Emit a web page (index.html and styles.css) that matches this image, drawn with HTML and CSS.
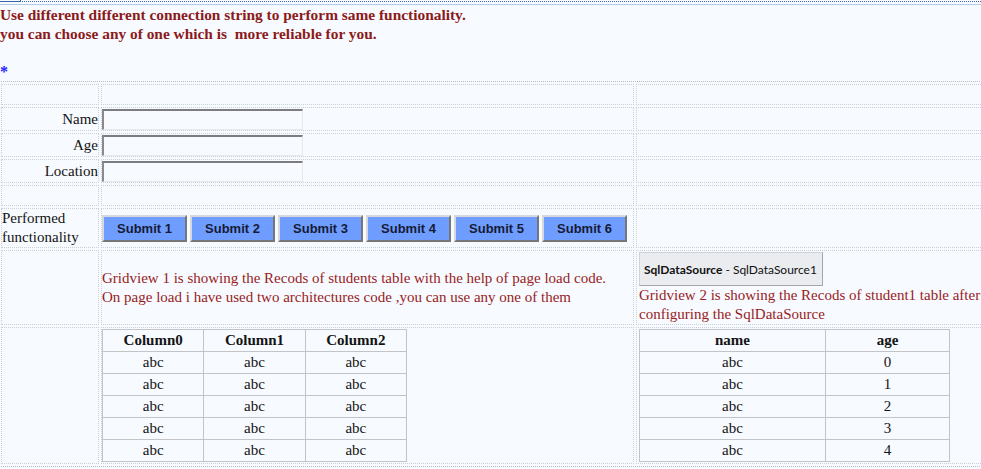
FILE: index.html
```html
<!DOCTYPE html>
<html>
<head>
<meta charset="utf-8">
<title>Connection strings</title>
<link rel="stylesheet" href="styles.css">
</head>
<body>
<div class="form-edge"><span class="form-tag"></span></div>
<div class="div-edge"></div>
<p class="intro"><span class="intro-text">Use different different connection string to perform same functionality.<br>you can choose any of one which is&nbsp; more reliable for you.</span><br><br><span class="star">*</span></p>
<table class="layout">
  <tr class="r-empty">
    <td class="c1"></td>
    <td class="c2"></td>
    <td class="c3"></td>
  </tr>
  <tr class="r-field">
    <td class="c1 lbl">Name</td>
    <td class="c2"><input class="tb" type="text"></td>
    <td class="c3"></td>
  </tr>
  <tr class="r-field">
    <td class="c1 lbl">Age</td>
    <td class="c2"><input class="tb" type="text"></td>
    <td class="c3"></td>
  </tr>
  <tr class="r-field">
    <td class="c1 lbl">Location</td>
    <td class="c2"><input class="tb" type="text"></td>
    <td class="c3"></td>
  </tr>
  <tr class="r-empty">
    <td class="c1"></td>
    <td class="c2"></td>
    <td class="c3"></td>
  </tr>
  <tr class="r-buttons">
    <td class="c1 perf">Performed functionality</td>
    <td class="c2">
      <div class="btns">
        <button class="btn">Submit 1</button>
        <button class="btn">Submit 2</button>
        <button class="btn">Submit 3</button>
        <button class="btn">Submit 4</button>
        <button class="btn">Submit 5</button>
        <button class="btn">Submit 6</button>
      </div>
    </td>
    <td class="c3"></td>
  </tr>
  <tr class="r-info">
    <td class="c1"></td>
    <td class="c2 note">Gridview 1 is showing the Recods of students table with the help of page load code.<br>On page load i have used two architectures code ,you can use any one of them</td>
    <td class="c3">
      <div class="sds"><span><b>SqlDataSource</b> - SqlDataSource1</span></div>
      <div class="note">Gridview 2 is showing the Recods of student1 table after configuring the SqlDataSource</div>
    </td>
  </tr>
  <tr class="r-grids">
    <td class="c1"></td>
    <td class="c2">
      <table class="grid grid1">
        <tr><th>Column0</th><th>Column1</th><th>Column2</th></tr>
        <tr><td>abc</td><td>abc</td><td>abc</td></tr>
        <tr><td>abc</td><td>abc</td><td>abc</td></tr>
        <tr><td>abc</td><td>abc</td><td>abc</td></tr>
        <tr><td>abc</td><td>abc</td><td>abc</td></tr>
        <tr><td>abc</td><td>abc</td><td>abc</td></tr>
      </table>
    </td>
    <td class="c3">
      <table class="grid grid2">
        <tr><th>name</th><th>age</th></tr>
        <tr><td>abc</td><td>0</td></tr>
        <tr><td>abc</td><td>1</td></tr>
        <tr><td>abc</td><td>2</td></tr>
        <tr><td>abc</td><td>3</td></tr>
        <tr><td>abc</td><td>4</td></tr>
      </table>
    </td>
  </tr>
</table>
</body>
</html>
```
FILE: styles.css
```css
html, body {
  margin: 0;
  padding: 0;
  overflow: hidden;
  background: #f7faff;
}
body {
  font-family: "Liberation Serif", "Times New Roman", serif;
  font-size: 15px;
  color: #141414;
}
.form-edge {
  height: 2px;
  background: repeating-linear-gradient(90deg, #3a64b0 0 1px, transparent 1px 2px) left bottom / 100% 1px no-repeat;
}
.form-tag {
  display: block;
  width: 21px;
  height: 2px;
  box-sizing: border-box;
  border-bottom: 1px solid #3a64b0;
  border-right: 1px solid #3a64b0;
  background: #f7faff;
}
.div-edge {
  margin-top: 2px;
  height: 1px;
  background: #b4cbe8;
}
.intro {
  margin: 0;
  height: 76px;
  font-size: 15.4px;
  line-height: 19px;
}
.intro-text {
  font-weight: bold;
  color: #8b1a1a;
}
.star {
  color: #1f1fff;
  font-weight: bold;
  font-size: 16px;
  line-height: 0;
}
.layout {
  border: 1px dotted #b8bcc4;
  border-collapse: separate;
  border-spacing: 2px;
  width: 988px;
  margin-left: -2px;
}
.layout > tbody > tr > td {
  border: 1px dotted #cbcfd6;
  padding: 0;
  line-height: 19px;
}
.c1 { width: 96px; }
.c2 { width: 531px; }
.c3 { padding-left: 2px !important; }
.lbl { text-align: right; }
.r-empty > td { height: 19px; }
.r-field > td { height: 22px; }
.r-buttons > td { height: 38px; }
.perf { vertical-align: top; }
.tb {
  display: block;
  width: 201px;
  height: 21px;
  box-sizing: border-box;
  margin: 0;
  padding: 0;
  border-style: solid;
  border-width: 2px 1px 1px 2px;
  border-color: #7c7c80 #e6e8ec #e6e8ec #8a8a8e;
  background: #f7faff;
}
.btns {
  display: flex;
  gap: 3px;
}
.btn {
  width: 85px;
  height: 27px;
  box-sizing: border-box;
  margin: 0;
  padding: 0;
  background: #6f9dff;
  border-style: solid;
  border-width: 2px;
  border-color: #d6d8dc #767676 #767676 #d6d8dc;
  font-family: "Liberation Sans", Arial, sans-serif;
  font-weight: bold;
  font-size: 13px;
  color: #161b36;
}
.note {
  color: #981c1c;
}
.r-info > td {
  vertical-align: middle;
}
.sds {
  width: 184px;
  height: 34px;
  box-sizing: border-box;
  margin-top: 1px;
  padding-left: 4px;
  display: flex;
  align-items: center;
  background: #ebecf0;
  border: 1px solid #d0d2d6;
  border-right-color: #a4a6aa;
  border-bottom-color: #a4a6aa;
  font-family: Lato, "Open Sans", sans-serif;
  font-size: 12px;
  color: #111;
  white-space: nowrap;
}
.r-grids > td {
  vertical-align: top;
}
.grid {
  border-collapse: collapse;
  border: 1px solid #a8a8a8;
  margin-top: 1px;
  margin-bottom: 1px;
}
.grid th, .grid td {
  border: 1px solid #c2c4c8;
  height: 21px;
  padding: 0;
  text-align: center;
  line-height: 19px;
  font-size: 15px;
  color: #141414;
}
.grid th { font-weight: bold; }
.grid1 { width: 305px; }
.grid2 { width: 311px; }
.grid2 th:first-child { width: 185px; }
```
